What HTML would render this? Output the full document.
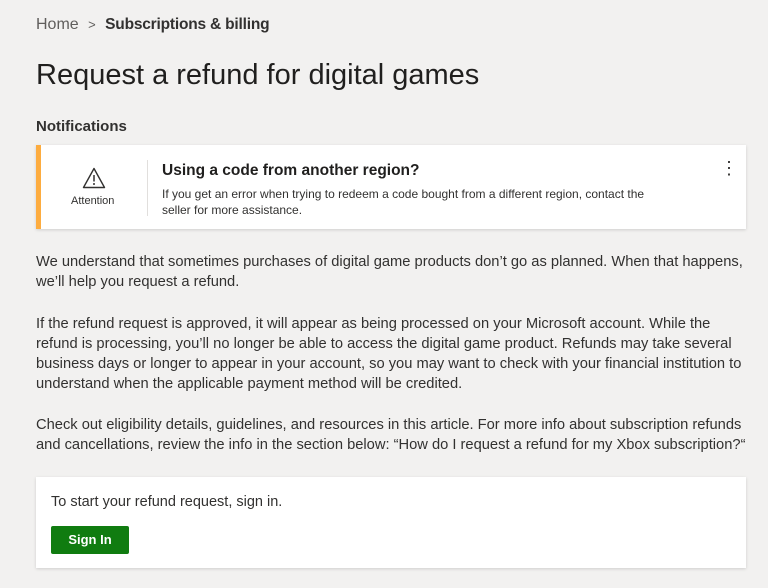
<!DOCTYPE html>
<html><head><meta charset="utf-8"><style>
*{margin:0;padding:0;box-sizing:border-box}
body{width:768px;height:588px;background:#f2f1f0;font-family:"Liberation Sans",sans-serif;color:#323130;position:relative;overflow:hidden}
.a{position:absolute;white-space:nowrap}
p.l{position:absolute;left:36px;font-size:14.7px;line-height:20px;white-space:nowrap;color:#323130}
</style></head><body>
<div class="a" style="left:36px;top:16px;font-size:16px;color:#605e5c">Home <span style="margin:0 5px;font-size:13px">&gt;</span> <b style="color:#323130;font-size:15.5px;letter-spacing:-0.2px">Subscriptions &amp; billing</b></div>
<div class="a" style="left:36px;top:59px;font-size:29px;color:#201f1e">Request a refund for digital games</div>
<div class="a" style="left:36px;top:118px;font-size:15px;font-weight:bold">Notifications</div>
<div class="a" style="left:36px;top:145px;width:710px;height:84px;background:#fff;box-shadow:0 1px 3px rgba(0,0,0,.15)">
 <div style="position:absolute;left:0;top:0;width:5px;height:84px;background:#fdac3f"></div>
 <svg style="position:absolute;left:46px;top:22px" width="24" height="22" viewBox="0 0 24 22"><path d="M12 1.5L22.5 20.5H1.5Z" fill="none" stroke="#323130" stroke-width="1.4" stroke-linejoin="round"/><path d="M12 8v6.5" stroke="#323130" stroke-width="1.5"/><circle cx="12" cy="17" r="1" fill="#323130"/></svg>
 <div class="a" style="left:35px;top:50px;font-size:11px">Attention</div>
 <div style="position:absolute;left:111px;top:15px;width:1px;height:56px;background:#e1dfdd"></div>
 <div class="a" style="left:126px;top:17px;font-size:15.5px;font-weight:bold;color:#201f1e">Using a code from another region?</div>
 <div class="a" style="left:126px;top:41px;font-size:12px;line-height:16px">If you get an error when trying to redeem a code bought from a different region, contact the<br>seller for more assistance.</div>
 <div class="a" style="left:684px;top:14px;font-size:18px;line-height:18px">⋮</div>
</div>
<p class="l" style="top:252px">We understand that sometimes purchases of digital game products don’t go as planned. When that happens,<br>we’ll help you request a refund.</p>
<p class="l" style="top:314px">If the refund request is approved, it will appear as being processed on your Microsoft account. While the<br>refund is processing, you’ll no longer be able to access the digital game product. Refunds may take several<br>business days or longer to appear in your account, so you may want to check with your financial institution to<br>understand when the applicable payment method will be credited.</p>
<p class="l" style="top:415px">Check out eligibility details, guidelines, and resources in this article. For more info about subscription refunds<br>and cancellations, review the info in the section below: “How do I request a refund for my Xbox subscription?“</p>
<div class="a" style="left:36px;top:477px;width:710px;height:91px;background:#fff;box-shadow:0 1px 3px rgba(0,0,0,.15)">
 <div class="a" style="left:15px;top:17px;font-size:14.5px">To start your refund request, sign in.</div>
 <div class="a" style="left:15px;top:49px;width:78px;height:28px;background:#107c10;color:#fff;font-size:13px;font-weight:bold;text-align:center;line-height:28px;border-radius:2px">Sign In</div>
</div>
</body></html>
